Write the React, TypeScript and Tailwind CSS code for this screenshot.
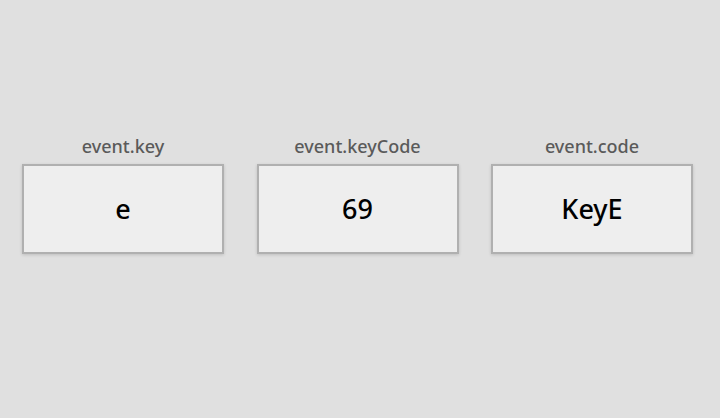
const items = [
  { label: "event.key", value: "e" },
  { label: "event.keyCode", value: "69" },
  { label: "event.code", value: "KeyE" },
];

export default function App() {
  return (
    <div
      className="w-[720px] h-[418px] bg-[#e0e0e0] pt-[134px] pl-[22px]"
      style={{ fontFamily: '"Noto Sans", "Open Sans", sans-serif' }}
    >
      <div className="flex gap-[32.5px]">
        {items.map((item) => (
          <div key={item.label} className="flex flex-col items-center">
            <div className="text-[18px] leading-[24px] font-medium text-[#5a5a5a] mb-[6px]">
              {item.label}
            </div>
            <div className="w-[202px] h-[90px] bg-[#eeeeee] border-2 border-[#b0b0b0] shadow-[0_1px_3px_rgba(0,0,0,0.15)] flex items-center justify-center text-[27px] font-medium text-black">
              {item.value}
            </div>
          </div>
        ))}
      </div>
    </div>
  );
}
